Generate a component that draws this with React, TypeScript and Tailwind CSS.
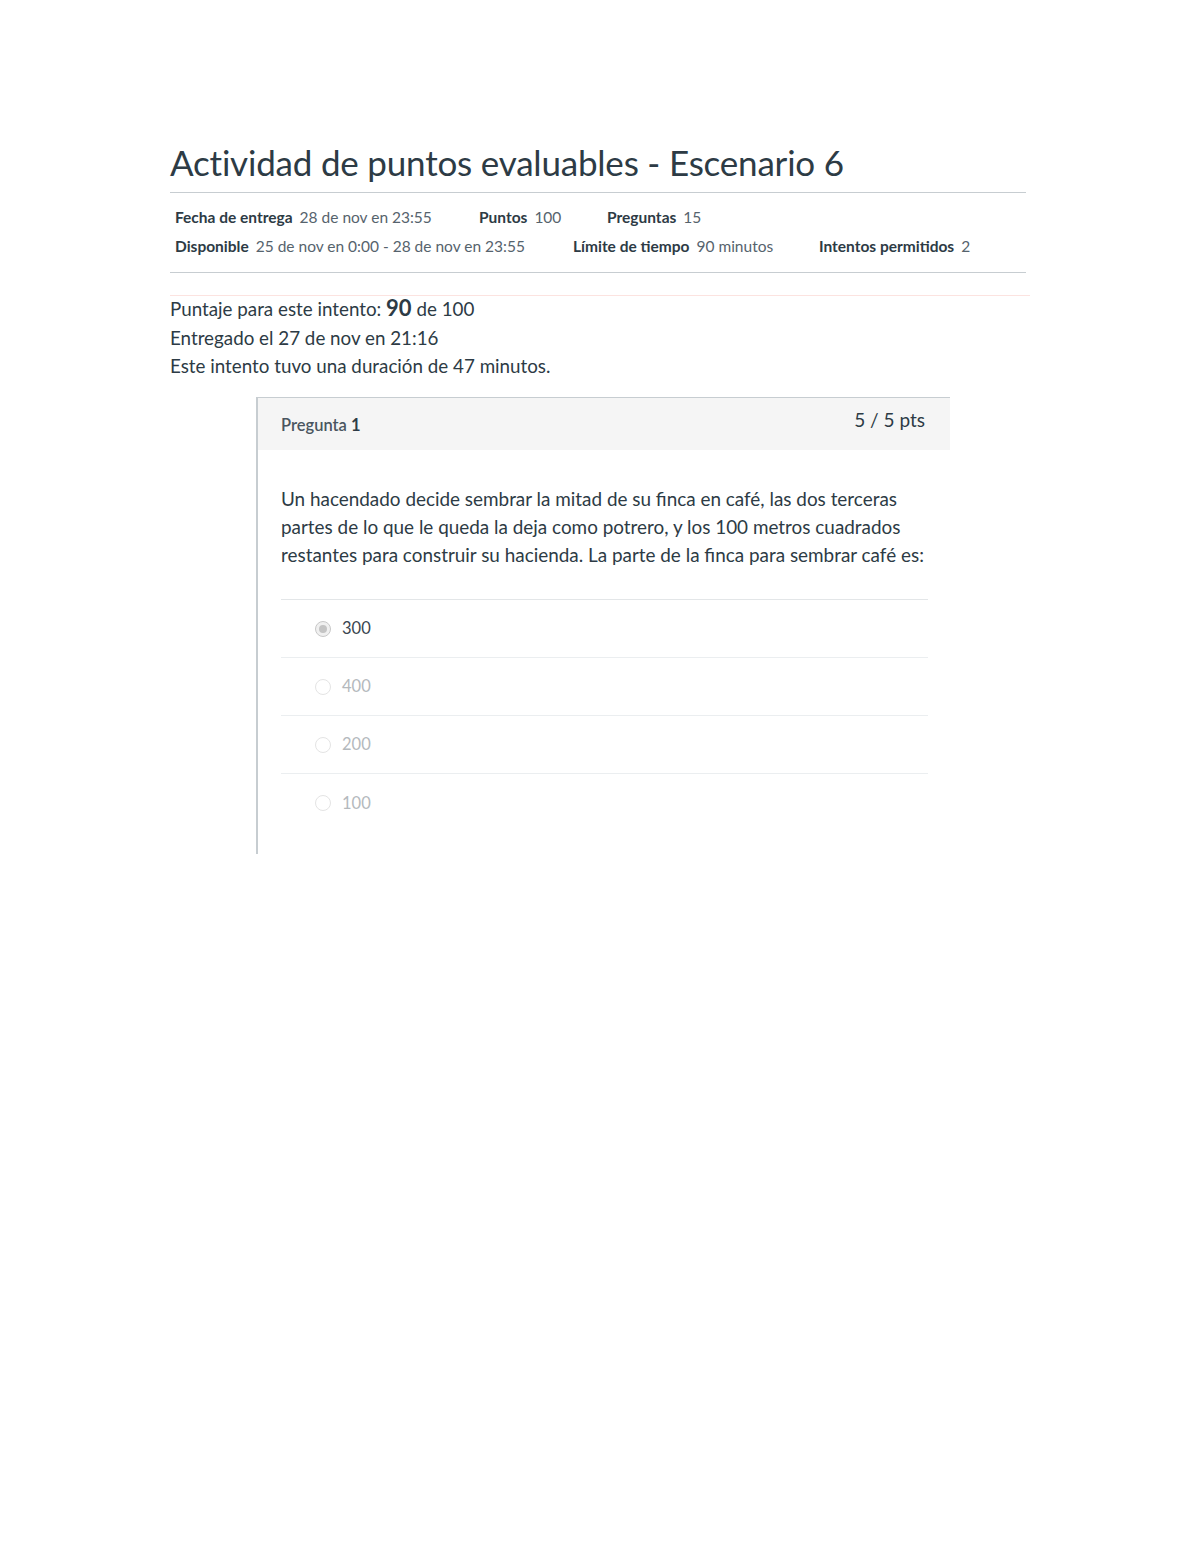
const meta1 = [
  { label: 'Fecha de entrega', value: '28 de nov en 23:55', w: 'w-[304px]' },
  { label: 'Puntos', value: '100', w: 'w-[128px]' },
  { label: 'Preguntas', value: '15', w: '' },
];

const meta2 = [
  { label: 'Disponible', value: '25 de nov en 0:00 - 28 de nov en 23:55', w: 'w-[398px]' },
  { label: 'Límite de tiempo', value: '90 minutos', w: 'w-[246px]' },
  { label: 'Intentos permitidos', value: '2', w: '' },
];

const answers = [
  { text: '300', selected: true },
  { text: '400', selected: false },
  { text: '200', selected: false },
  { text: '100', selected: false },
];

function MetaRow({ items }: { items: { label: string; value: string; w: string }[] }) {
  return (
    <div className="flex h-[29px] items-center">
      {items.map((item) => (
        <div key={item.label} className={`flex shrink-0 items-center gap-[7px] ${item.w}`}>
          <span className="font-bold text-[#2d3b45]">{item.label}</span>
          <span className="text-[#56636d]">{item.value}</span>
        </div>
      ))}
    </div>
  );
}

export default function App() {
  return (
    <div className="min-h-[1553px] bg-white font-['Lato','Open_Sans',sans-serif] text-[#2d3b45]">
      <div className="ml-[170px] w-[856px] pt-[140px]">
        <h1 className="h-[52px] text-[35px] leading-[44px] font-normal tracking-[-0.2px] text-[#2d3b45]">
          Actividad de puntos evaluables - Escenario 6
        </h1>
        <div className="border-t border-[#c7cdd1]" />
        <div className="px-[5px] pt-[10px] pb-[11px] text-[15.5px]">
          <MetaRow items={meta1} />
          <MetaRow items={meta2} />
        </div>
        <div className="border-t border-[#c7cdd1]" />
      </div>

      <div className="ml-[170px] mt-[22px] w-[860px] border-t border-[#fce3e0]" />

      <div className="ml-[170px] text-[18.8px] leading-[28.5px] text-[#2d3b45]">
        <p className="-mt-[2px]">
          Puntaje para este intento: <span className="text-[22px] font-bold">90</span> de 100
        </p>
        <p>Entregado el 27 de nov en 21:16</p>
        <p>Este intento tuvo una duración de 47 minutos.</p>
      </div>

      <div className="ml-[256px] mt-[16px] h-[457px] w-[694px] border-t border-l-2 border-[#c7cdd1]">
        <div className="flex h-[52px] items-start justify-between bg-[#f5f5f5] pr-[25px] pl-[23px]">
          <div className="pt-[15px] text-[16.5px] font-bold text-[#2d3b45]">
            <span className="font-semibold text-[#4a5560]">Pregunta</span> 1
          </div>
          <div className="pt-[8px] text-[19px] text-[#2d3b45]">5 / 5 pts</div>
        </div>
        <div className="pr-[22px] pl-[23px] pt-[35px]">
          <p className="text-[18.9px] leading-[28px] text-[#2d3b45] whitespace-nowrap">
            Un hacendado decide sembrar la mitad de su finca en café, las dos terceras
            <br />
            partes de lo que le queda la deja como potrero, y los 100 metros cuadrados
            <br />
            restantes para construir su hacienda. La parte de la finca para sembrar café es:
          </p>
          <div className="mt-[30px] border-t border-[#e3e6e8]">
            {answers.map((a, i) => (
              <div
                key={a.text}
                className={`flex h-[58px] items-center pl-[34px] pt-[1px] ${i < answers.length - 1 ? 'border-b border-[#ebeef0]' : ''}`}
              >
                <span
                  className={`mr-[11px] flex h-[16px] w-[16px] items-center justify-center rounded-full border ${a.selected ? 'border-[#c8c8c8] bg-[#f0f0f0]' : 'border-[#e4e4e4] bg-white'}`}
                >
                  {a.selected && <span className="h-[8px] w-[8px] rounded-full bg-[#c4c4c4]" />}
                </span>
                <span className={`text-[16.5px] ${a.selected ? 'text-[#3a4650]' : 'text-[#b4b9bd]'}`}>{a.text}</span>
              </div>
            ))}
          </div>
        </div>
      </div>
    </div>
  );
}
